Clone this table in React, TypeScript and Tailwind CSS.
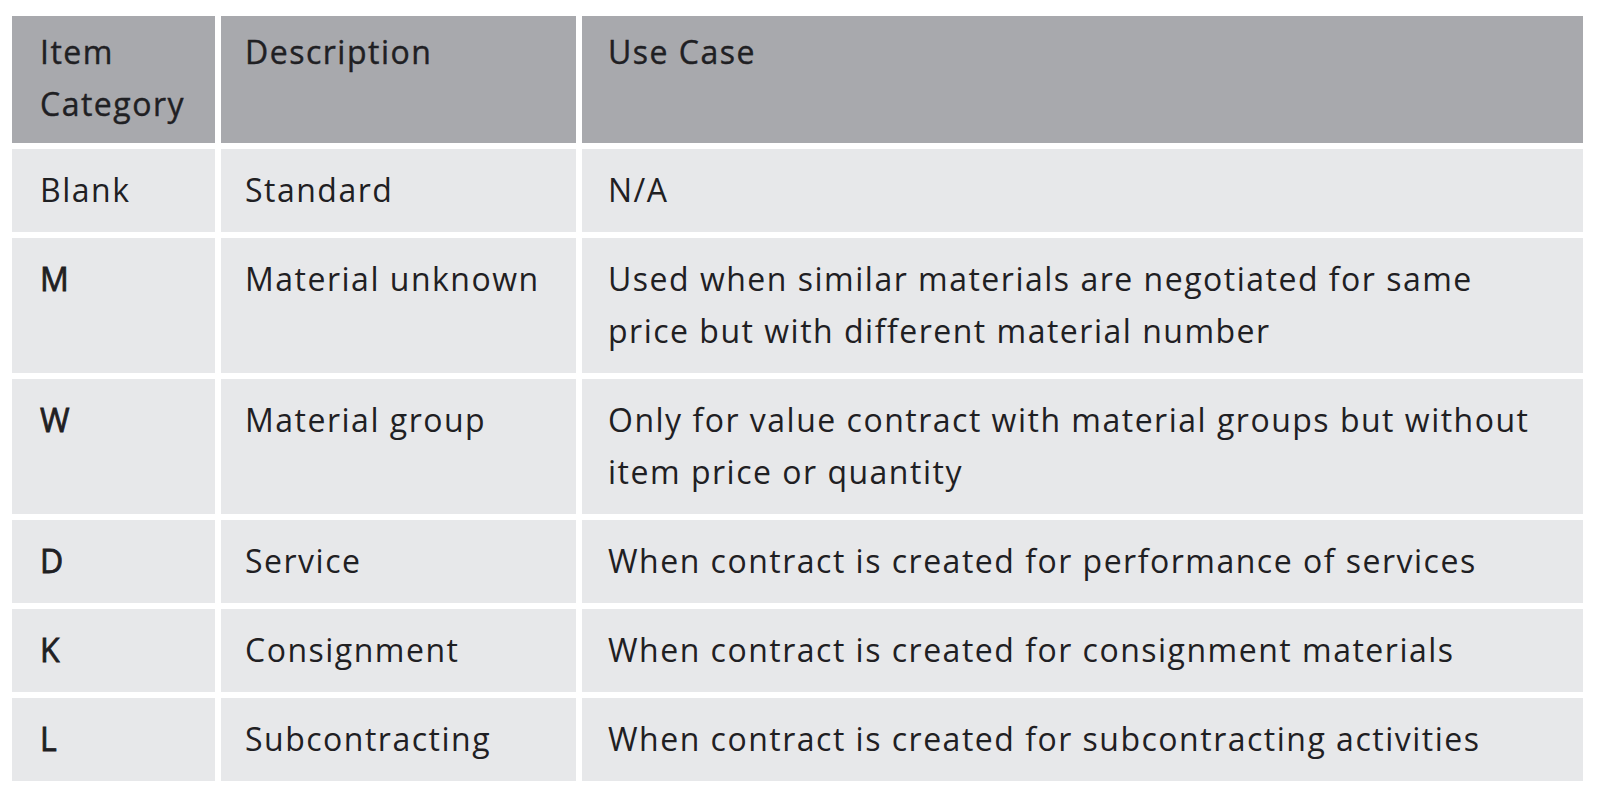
const rows: [string, string, string][] = [
  ["Blank", "Standard", "N/A"],
  ["M", "Material unknown", "Used when similar materials are negotiated for same price but with different material number"],
  ["W", "Material group", "Only for value contract with material groups but without item price or quantity"],
  ["D", "Service", "When contract is created for performance of services"],
  ["K", "Consignment", "When contract is created for consignment materials"],
  ["L", "Subcontracting", "When contract is created for subcontracting activities"],
];

export default function App() {
  return (
    <div className="min-h-screen bg-white pl-[12px] pt-[16px] font-['Open_Sans',sans-serif] text-[32px] leading-[52px] tracking-[1.5px] text-[#1f2023]">
      <div className="grid w-[1571px] grid-cols-[203px_355px_1fr] gap-x-[6px] gap-y-[6px]">
        <div className="bg-[#a8a9ad] pl-[28px] pt-[10px] pb-[13px] [-webkit-text-stroke:0.4px_currentColor]">Item Category</div>
        <div className="bg-[#a8a9ad] pl-[24px] pt-[10px] pb-[13px] [-webkit-text-stroke:0.4px_currentColor]">Description</div>
        <div className="bg-[#a8a9ad] pl-[26px] pt-[10px] pb-[13px] [-webkit-text-stroke:0.4px_currentColor]">Use Case</div>
        {rows.map(([code, desc, use]) => (
          <div key={code} className="contents">
            <div className={`bg-[#e7e8ea] pl-[28px] pt-[15px] pb-[16px] ${code === "Blank" ? "" : "[-webkit-text-stroke:0.8px_currentColor]"}`}>
              {code}
            </div>
            <div className="bg-[#e7e8ea] pl-[24px] pt-[15px] pb-[16px]">{desc}</div>
            <div className="bg-[#e7e8ea] pl-[26px] pr-[24px] pt-[15px] pb-[16px]">{use}</div>
          </div>
        ))}
      </div>
    </div>
  );
}
